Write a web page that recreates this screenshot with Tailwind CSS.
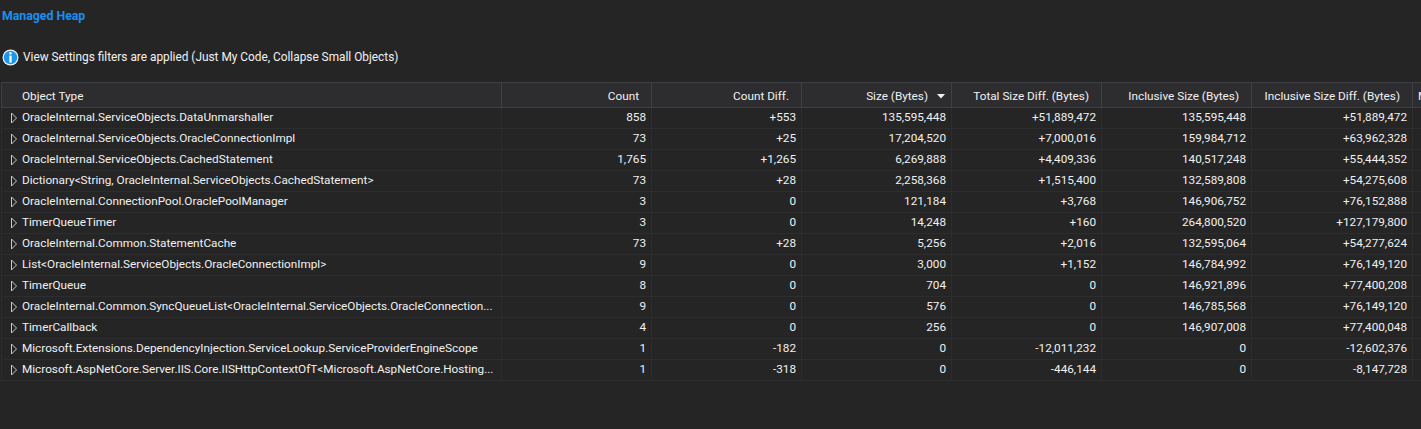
<!DOCTYPE html>
<html lang="en">
<head>
  <meta charset="UTF-8">
  <title>Managed Heap</title>
  <script src="https://cdn.jsdelivr.net/npm/@tailwindcss/browser@4"></script>
</head>
<body class="bg-[#252526] text-[#f1f1f1] font-['Roboto',sans-serif] text-[11.75px] overflow-hidden h-[429px] w-[1421px]">
  <div class="pl-[2px] pt-[8px] h-[46px] font-bold text-[#1b8fef] text-[12.3px] leading-[16px]">Managed Heap</div>

  <div class="flex items-center h-[22px] pl-[2px] gap-[4px] text-[11.85px]">
    <svg width="17" height="17" viewBox="0 0 17 17">
      <circle cx="8.5" cy="8.5" r="8" fill="#f1f1f1"/>
      <circle cx="8.5" cy="8.5" r="6.8" fill="#1c97ea"/>
      <rect x="7.4" y="3.2" width="2.2" height="2.2" fill="#fff"/>
      <rect x="7.4" y="6.6" width="2.2" height="7" fill="#fff"/>
    </svg>
    <span class="pt-[2px]">View Settings filters are applied (Just My Code, Collapse Small Objects)</span>
  </div>

  <div class="mt-[14px] ml-[1px] w-[1440px]">
    <div id="head" class="grid grid-cols-[500px_150px_150px_150px_150px_150px_161px_30px] h-[26px] bg-[#2d2d30] border-y border-[#3f3f46] border-l leading-[26px]"></div>
    <div id="rows"></div>
  </div>

  <script>
    const heads = ['Object Type', 'Count', 'Count Diff.', 'Size (Bytes)', 'Total Size Diff. (Bytes)', 'Inclusive Size (Bytes)', 'Inclusive Size Diff. (Bytes)', 'Module'];
    const rows = [
      ['OracleInternal.ServiceObjects.DataUnmarshaller', '858', '+553', '135,595,448', '+51,889,472', '135,595,448', '+51,889,472'],
      ['OracleInternal.ServiceObjects.OracleConnectionImpl', '73', '+25', '17,204,520', '+7,000,016', '159,984,712', '+63,962,328'],
      ['OracleInternal.ServiceObjects.CachedStatement', '1,765', '+1,265', '6,269,888', '+4,409,336', '140,517,248', '+55,444,352'],
      ['Dictionary<String, OracleInternal.ServiceObjects.CachedStatement>', '73', '+28', '2,258,368', '+1,515,400', '132,589,808', '+54,275,608'],
      ['OracleInternal.ConnectionPool.OraclePoolManager', '3', '0', '121,184', '+3,768', '146,906,752', '+76,152,888'],
      ['TimerQueueTimer', '3', '0', '14,248', '+160', '264,800,520', '+127,179,800'],
      ['OracleInternal.Common.StatementCache', '73', '+28', '5,256', '+2,016', '132,595,064', '+54,277,624'],
      ['List<OracleInternal.ServiceObjects.OracleConnectionImpl>', '9', '0', '3,000', '+1,152', '146,784,992', '+76,149,120'],
      ['TimerQueue', '8', '0', '704', '0', '146,921,896', '+77,400,208'],
      ['OracleInternal.Common.SyncQueueList<OracleInternal.ServiceObjects.OracleConnection...', '9', '0', '576', '0', '146,785,568', '+76,149,120'],
      ['TimerCallback', '4', '0', '256', '0', '146,907,008', '+77,400,048'],
      ['Microsoft.Extensions.DependencyInjection.ServiceLookup.ServiceProviderEngineScope', '1', '-182', '0', '-12,011,232', '0', '-12,602,376'],
      ['Microsoft.AspNetCore.Server.IIS.Core.IISHttpContextOfT<Microsoft.AspNetCore.Hosting...', '1', '-318', '0', '-446,144', '0', '-8,147,728']
    ];
    const esc = s => s.replace(/&/g, '&amp;').replace(/</g, '&lt;');
    const arrow = '<svg width="8" height="12" viewBox="0 0 8 12" class="shrink-0"><path d="M1.5 1 L6.5 6 L1.5 11 Z" fill="none" stroke="#c8c8c8"/></svg>';
    const sort = '<svg width="8" height="5" viewBox="0 0 8 5" class="ml-[9px] mr-[6px] shrink-0"><path d="M0 0 H8 L4 4.5 Z" fill="#f1f1f1"/></svg>';

    document.getElementById('head').innerHTML = heads.map((h, i) => {
      if (i === 0) return `<div class="border-r border-[#3f3f46] pl-[20px]">${h}</div>`;
      if (i === 3) return `<div class="border-r border-[#3f3f46] flex items-center justify-end">${h}${sort}</div>`;
      if (i === 7) return `<div class="pl-[5px]">${h}</div>`;
      return `<div class="border-r border-[#3f3f46] text-right pr-[12px]">${h}</div>`;
    }).join('');

    document.getElementById('rows').innerHTML = rows.map(r => {
      const cells = r.map((c, i) => i === 0
        ? `<div class="border-r border-[#2d2d30] flex items-center pl-[8px] gap-[4px] whitespace-nowrap overflow-hidden">${arrow}<span>${esc(c)}</span></div>`
        : `<div class="border-r border-[#2d2d30] text-right pr-[5px] leading-[19px]">${c}</div>`).join('');
      return `<div class="grid grid-cols-[500px_150px_150px_150px_150px_150px_161px_30px] h-[21px] border-b border-l border-[#2d2d30]">${cells}</div>`;
    }).join('');
  </script>
</body>
</html>
